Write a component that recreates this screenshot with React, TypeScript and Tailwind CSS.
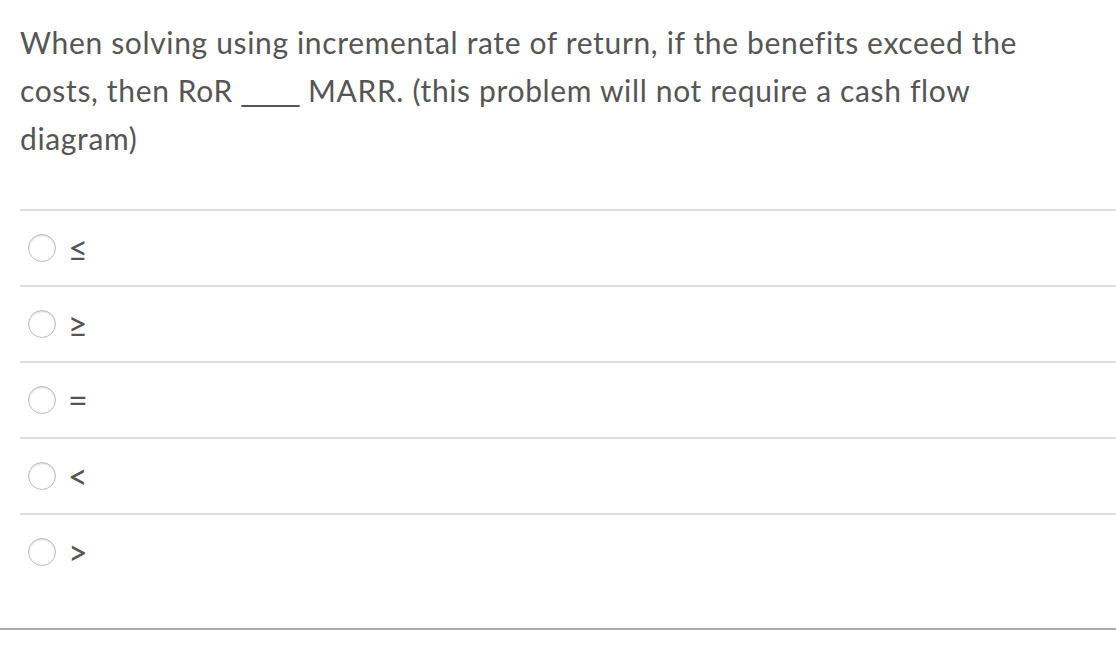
import React from "react";

const options = ["≤", "≥", "=", "<", ">"];

export default function App() {
  return (
    <div className="w-[1116px] h-[658px] bg-white overflow-hidden" style={{ fontFamily: "Lato, 'Open Sans', sans-serif" }}>
      <div className="pl-[20px] pr-[60px] pt-[18px] text-[30px] leading-[48px] tracking-[0.65px] text-[#555555]">
        When solving using incremental rate of return, if the benefits exceed the costs, then RoR{" "}
        <span className="underline decoration-[2px] underline-offset-[3px]">{"\u00a0\u00a0\u00a0\u00a0\u00a0\u00a0\u00a0"}</span>{" "}
        MARR. (this problem will not require a cash flow diagram)
      </div>
      <div className="ml-[20px] mt-[47px]">
        {options.map((o, i) => (
          <div key={i} className="h-[76px] border-t-2 border-[#dddddd] flex items-center">
            <div className="ml-[8px] w-[28px] h-[28px] rounded-full border border-[#bbbbbb] shadow-[inset_0_1px_2px_rgba(0,0,0,0.15)] bg-white" />
            <span className="ml-[12px] text-[34px] leading-none text-[#555555]">{o}</span>
          </div>
        ))}
      </div>
      <div className="mt-[39px] border-t-2 border-[#aaaaaa]" />
    </div>
  );
}
